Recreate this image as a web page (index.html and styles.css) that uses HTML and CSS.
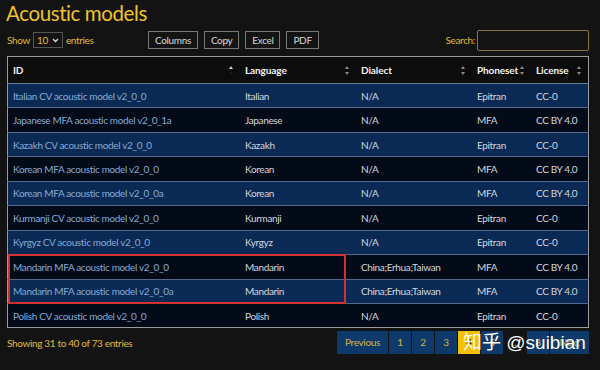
FILE: index.html
```html
<!DOCTYPE html>
<html>
<head>
<meta charset="utf-8">
<link rel="stylesheet" href="styles.css">
</head>
<body>
<h1 class="title">Acoustic models</h1>
<div class="toolbar">
  <div class="length">Show <span class="select">10 <svg width="7" height="5" viewBox="0 0 7 5"><path d="M1 1l2.5 2.5L6 1" fill="none" stroke="#ddd" stroke-width="1.3"/></svg></span> entries</div>
  <div class="buttons">
    <span class="btn">Columns</span><span class="btn">Copy</span><span class="btn">Excel</span><span class="btn">PDF</span>
  </div>
  <div class="search">Search:<span class="input"></span></div>
</div>
<div class="tablewrap">
<table class="grid">
  <thead>
    <tr>
      <th class="c-id">ID<span class="sort asc"></span></th>
      <th class="c-lang">Language<span class="sort"></span></th>
      <th class="c-dia">Dialect<span class="sort"></span></th>
      <th class="c-ph">Phoneset<span class="sort"></span></th>
      <th class="c-lic">License<span class="sort"></span></th>
    </tr>
  </thead>
  <tbody>
    <tr class="odd"><td class="link">Italian CV acoustic model v2_0_0</td><td>Italian</td><td>N/A</td><td>Epitran</td><td>CC-0</td></tr>
    <tr class="even"><td class="link">Japanese MFA acoustic model v2_0_1a</td><td>Japanese</td><td>N/A</td><td>MFA</td><td>CC BY 4.0</td></tr>
    <tr class="odd"><td class="link">Kazakh CV acoustic model v2_0_0</td><td>Kazakh</td><td>N/A</td><td>Epitran</td><td>CC-0</td></tr>
    <tr class="even"><td class="link">Korean MFA acoustic model v2_0_0</td><td>Korean</td><td>N/A</td><td>MFA</td><td>CC BY 4.0</td></tr>
    <tr class="odd"><td class="link">Korean MFA acoustic model v2_0_0a</td><td>Korean</td><td>N/A</td><td>MFA</td><td>CC BY 4.0</td></tr>
    <tr class="even"><td class="link">Kurmanji CV acoustic model v2_0_0</td><td>Kurmanji</td><td>N/A</td><td>Epitran</td><td>CC-0</td></tr>
    <tr class="odd"><td class="link">Kyrgyz CV acoustic model v2_0_0</td><td>Kyrgyz</td><td>N/A</td><td>Epitran</td><td>CC-0</td></tr>
    <tr class="even"><td class="link">Mandarin MFA acoustic model v2_0_0</td><td>Mandarin</td><td>China;Erhua;Taiwan</td><td>MFA</td><td>CC BY 4.0</td></tr>
    <tr class="odd"><td class="link">Mandarin MFA acoustic model v2_0_0a</td><td>Mandarin</td><td>China;Erhua;Taiwan</td><td>MFA</td><td>CC BY 4.0</td></tr>
    <tr class="even"><td class="link">Polish CV acoustic model v2_0_0</td><td>Polish</td><td>N/A</td><td>Epitran</td><td>CC-0</td></tr>
  </tbody>
</table>
<div class="highlight"></div>
</div>
<div class="footer">
  <div class="info">Showing 31 to 40 of 73 entries</div>
  <div class="pager">
    <span class="pg prev">Previous</span><span class="pg">1</span><span class="pg">2</span><span class="pg">3</span><span class="pg active">4</span><span class="pg">5</span><span class="pg ell">…</span><span class="pg">8</span><span class="pg next">Next</span>
    <span class="watermark">知乎 @suibian</span>
  </div>
</div>
</body>
</html>
```
FILE: styles.css
```css
html, body {
  margin: 0;
  padding: 0;
  background: #131313;
}
body {
  width: 600px;
  height: 370px;
  overflow: hidden;
  padding: 0 11px 0 7px;
  box-sizing: border-box;
  font-family: "Lato", "Noto Sans CJK SC", sans-serif;
  font-size: 10px;
  letter-spacing: -0.35px;
  color: #ddd;
}
.title {
  margin: 0 0 0 -1px;
  font-size: 20.5px;
  letter-spacing: -0.4px;
  font-weight: 400;
  line-height: 27px;
  color: #f0c22e;
  height: 26px;
}
.toolbar {
  display: flex;
  align-items: center;
  height: 28px;
}
.length {
  color: #e0b838;
  display: flex;
  align-items: center;
  gap: 3px;
  width: 141px;
}
.select {
  display: inline-flex;
  align-items: center;
  gap: 4px;
  height: 14px;
  padding: 0 3px;
  border: 1px solid #555;
  color: #e0b838;
  background: #141414;
}
.buttons {
  display: flex;
  gap: 6px;
}
.btn {
  border: 1px solid #777;
  background: #141414;
  color: #d8d8d8;
  padding: 0 6px;
  height: 16px;
  line-height: 16px;
}
.search {
  margin-left: auto;
  display: flex;
  align-items: center;
  gap: 2px;
  color: #e0b838;
}
.input {
  width: 110px;
  height: 19px;
  border: 1px solid #8a7542;
  border-radius: 2px;
}
.tablewrap {
  position: relative;
  margin-top: 2px;
}
.grid {
  width: 582px;
  border-collapse: collapse;
  border: 1px solid #9a9a9a;
  table-layout: fixed;
}
.grid th {
  background: #0c0c0c;
  color: #f2f2f2;
  font-weight: 700;
  letter-spacing: -0.1px;
  text-align: left;
  height: 26px;
  padding: 0 5px;
  position: relative;
  border-bottom: 1px solid #6a7f99;
}
.c-id { width: 222px; }
.c-lang { width: 106px; }
.c-dia { width: 106px; }
.c-ph { width: 49px; }
.grid td {
  height: 23.45px;
  padding: 0 5px;
  color: #d4d8de;
  border-top: 1px solid #55698a;
  white-space: nowrap;
}
.grid tr.odd td { background: #0a2a55; }
.grid tr.even td { background: #030a18; }
.grid td.link { color: #86acd6; }
.sort {
  position: absolute;
  right: 6px;
  top: 9px;
  width: 5px;
  height: 9px;
}
.sort::before, .sort::after {
  content: "";
  position: absolute;
  left: 0;
  border-left: 2.5px solid transparent;
  border-right: 2.5px solid transparent;
}
.sort::before { top: 0; border-bottom: 3px solid #8a8a8a; }
.sort::after { bottom: 0; border-top: 3px solid #8a8a8a; }
.sort.asc::before { border-bottom-color: #c8c8e0; }
.sort.asc::after { border-top-color: #1a1a1a; }
.highlight {
  position: absolute;
  left: 1px;
  top: 198px;
  width: 338px;
  height: 50px;
  box-sizing: border-box;
  border: 2px solid #d2322d;
  pointer-events: none;
}
.footer {
  display: flex;
  align-items: center;
  margin-top: 3px;
}
.info {
  color: #e0b838;
  margin-top: 1px;
}
.pager {
  margin-left: auto;
  display: flex;
  position: relative;
  gap: 1px;
}
.pg {
  background: #0d3a6a;
  color: #d8b040;
  height: 23px;
  line-height: 23px;
  width: 22px;
  text-align: center;
}
.pg.prev { width: 51px; }
.pg.next { width: 39px; }
.pg.active { background: #f5c000; color: #1a1a1a; }
.pg.ell { background: transparent; }
.watermark {
  position: absolute;
  left: 126px;
  top: 0;
  font-size: 19px;
  letter-spacing: 0;
  line-height: 23px;
  color: #fff;
  white-space: nowrap;
  font-family: "Liberation Sans", "Noto Sans CJK SC", sans-serif;
}
```
